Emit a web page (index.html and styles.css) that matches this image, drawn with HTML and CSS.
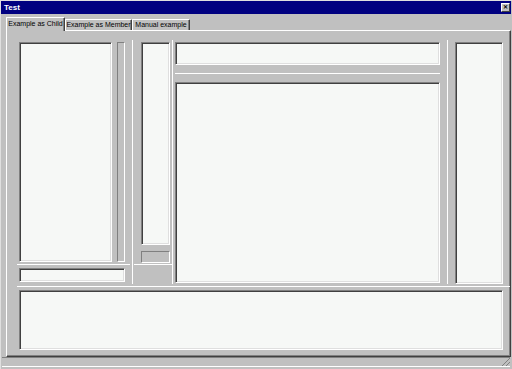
FILE: index.html
```html
<!DOCTYPE html>
<html>
<head>
<meta charset="utf-8">
<link rel="stylesheet" href="styles.css">
</head>
<body>
<div class="window">
  <div class="titlebar">
    <span class="title">Test</span>
    <span class="close">&#x2715;</span>
  </div>
  <div class="tabs">
    <div class="tab tab-active tab1">Example as Child</div>
    <div class="tab tab2">Example as Member</div>
    <div class="tab tab3">Manual example</div>
  </div>
  <div class="page">
    <div class="toprow">
      <div class="colA">
        <div class="colA-upper">
          <div class="sunk pane-left"></div>
          <div class="bar"></div>
        </div>
        <div class="hline"></div>
        <div class="sunk pane-leftbottom"></div>
      </div>
      <div class="vsplit vs1"></div>
      <div class="colB">
        <div class="sunk pane-b"></div>
        <div class="sunkgray pane-bsmall"></div>
        <div class="hline hlineB"></div>
      </div>
      <div class="vsplit vs2"></div>
      <div class="colC">
        <div class="sunk pane-ctop"></div>
        <div class="hsplitC"></div>
        <div class="sunk pane-cmain"></div>
      </div>
      <div class="vsplit vs3"></div>
      <div class="sunk pane-right"></div>
    </div>
    <div class="hsplit"></div>
    <div class="sunk pane-bottom"></div>
  </div>
  <div class="status"><span class="grip"></span></div>
</div>
</body>
</html>
```

FILE: styles.css
```css
* { box-sizing: border-box; }
html, body { margin: 0; padding: 0; }
body {
  background: #c0c0c0;
  font-family: "Liberation Sans", Arial, sans-serif;
  width: 512px;
  height: 369px;
  overflow: hidden;
}
.window {
  width: 512px;
  height: 369px;
  border-top: 1px solid #dfdfdf;
  border-left: 1px solid #dfdfdf;
  position: relative;
}
.titlebar {
  height: 13px;
  margin-right: 1px;
  background: #000080;
  display: flex;
  align-items: center;
  justify-content: space-between;
  padding-left: 3px;
}
.title {
  color: #fff;
  font-weight: bold;
  font-size: 8px;
  line-height: 13px;
}
.close {
  width: 9px;
  height: 9px;
  margin-right: 1px;
  background: #c0c0c0;
  border-top: 1px solid #fff;
  border-left: 1px solid #fff;
  border-right: 1px solid #404040;
  border-bottom: 1px solid #404040;
  font-size: 6px;
  line-height: 7px;
  text-align: center;
  font-weight: bold;
  color: #000;
}
.tabs {
  display: flex;
  align-items: flex-end;
  margin-top: 3px;
  padding-left: 5px;
  height: 13px;
  position: relative;
  z-index: 2;
}
.tab {
  height: 11px;
  font-size: 7px;
  line-height: 10px;
  color: #000;
  text-align: center;
  background: #c0c0c0;
  border-top: 1px solid #fff;
  border-left: 1px solid #fff;
  border-right: 1px solid #404040;
  box-shadow: inset -1px 0 #808080;
  border-radius: 1px 1px 0 0;
  white-space: nowrap;
}
.tab-active {
  height: 14px;
  margin-bottom: -1px;
  line-height: 12px;
}
.tab1 { width: 59px; }
.tab2 { width: 67px; }
.tab3 { width: 58px; }
.page {
  margin-left: 5px;
  width: 505px;
  height: 327px;
  border-top: 1px solid #fff;
  border-left: 1px solid #fff;
  border-right: 1px solid #404040;
  border-bottom: 1px solid #404040;
  box-shadow: inset -1px -1px #808080;
  padding: 9px 0 0 10px;
}
.toprow {
  display: flex;
  height: 244px;
}
.sunk {
  background: #f6f8f6;
  border-top: 1px solid #808080;
  border-left: 1px solid #808080;
  border-right: 1px solid #fff;
  border-bottom: 1px solid #fff;
  box-shadow: inset 1px 1px #404040, inset -1px -1px #dfdfdf;
}
.sunkgray {
  background: #c0c0c0;
  border-top: 1px solid #808080;
  border-left: 1px solid #808080;
  border-right: 1px solid #fff;
  border-bottom: 1px solid #fff;
}
.colA { width: 113px; }
.colA-upper {
  display: flex;
  height: 224px;
  padding: 2px 0 0 2px;
}
.pane-left { width: 93px; height: 220px; }
.bar {
  width: 8px;
  height: 220px;
  margin-left: 5px;
  border-left: 1px solid #808080;
  border-right: 1px solid #fff;
  border-top: 1px solid #808080;
  border-bottom: 1px solid #fff;
}
.hline { height: 1px; background: #fff; }
.pane-leftbottom {
  width: 106px;
  height: 14px;
  margin: 3px 0 0 2px;
}
.vsplit { flex: none; }
.vs1 {
  width: 4px;
  background: linear-gradient(to right, transparent 2px, #fff 2px, #fff 3px, transparent 3px);
}
.colB { width: 38px; }
.pane-b {
  width: 29px;
  height: 203px;
  margin: 2px 0 0 7px;
}
.pane-bsmall {
  width: 29px;
  height: 12px;
  margin: 6px 0 0 7px;
}
.hlineB { margin-top: 1px; }
.vs2 {
  width: 3px;
  background: linear-gradient(to right, #fff 1px, transparent 1px);
}
.colC { width: 265px; }
.pane-ctop { height: 23px; margin-top: 2px; }
.hsplitC {
  height: 17px;
  background: linear-gradient(to bottom, transparent 8px, #fff 8px, #fff 9px, transparent 9px);
}
.pane-cmain { height: 201px; }
.vs3 {
  width: 15px;
  background: linear-gradient(to right, transparent 7px, #fff 7px, #fff 8px, transparent 8px);
}
.pane-right {
  width: 48px;
  height: 242px;
  margin-top: 2px;
}
.hsplit {
  height: 6px;
  background: linear-gradient(to bottom, transparent 2px, #fff 2px, #fff 3px, transparent 3px);
}
.pane-bottom {
  width: 484px;
  height: 60px;
  margin-left: 2px;
}
.status {
  margin: 0 2px 0 1px;
  height: 10px;
  border-top: 1px solid #808080;
  border-bottom: 1px solid #fff;
  position: relative;
  background: #c0c0c0;
}
.grip {
  position: absolute;
  right: 0;
  bottom: 0;
  width: 8px;
  height: 8px;
  background: linear-gradient(135deg, transparent 45%, #808080 45%, #808080 55%, transparent 55%, transparent 70%, #808080 70%, #808080 80%, transparent 80%);
}
```
